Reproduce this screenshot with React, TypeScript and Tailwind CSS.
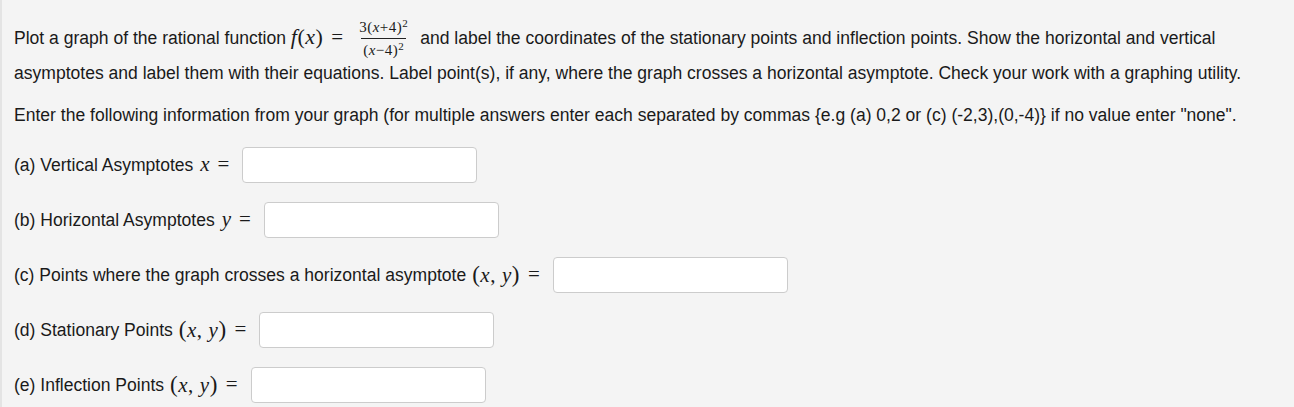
import React from 'react';

const serif = "font-['Liberation_Serif','Times_New_Roman',serif]";

function M({ children }: { children: React.ReactNode }) {
  return <span className={`${serif} italic text-[21px] ml-[7px]`}>{children}</span>;
}

function Eq() {
  return <span className={`${serif} text-[21px] ml-[8px] mr-[9px]`}>=</span>;
}

function XY() {
  return (
    <span className={`${serif} text-[21px] ml-[6px] tracking-[0.5px]`}>
      <span className="text-[23px]">(</span>
      <span className="italic">x</span>,<span className="italic ml-[6px]">y</span>
      <span className="text-[23px]">)</span>
    </span>
  );
}

function Frac() {
  return (
    <span className={`${serif} inline-flex flex-col items-center align-middle leading-none text-[15px] my-[-7px] mx-[5px] tracking-[0.5px]`}>
      <span className="px-[2px] pb-[3px]">
        3(<span className="italic">x</span>+4)<sup className="text-[11px]">2</sup>
      </span>
      <span className="border-t border-[#222] px-[2px] pt-[4px]">
        (<span className="italic">x</span>−4)<sup className="text-[11px]">2</sup>
      </span>
    </span>
  );
}

function Row({ label, math }: { label: string; math: React.ReactNode }) {
  return (
    <div className="flex items-center h-[36px]">
      <span>{label}</span>
      {math}
      <Eq />
      <input className="ml-[4px] h-[36px] w-[235px] bg-white border border-[#cccccc] rounded-[4px] outline-none" />
    </div>
  );
}

export default function App() {
  return (
    <div className="w-[1294px] h-[407px] bg-[#f4f4f4] border-l-2 border-[#e4e4e4] pl-[12px] pr-[20px] pt-[19px] text-[17.55px] text-[#1a1a1a] font-['Liberation_Sans',Arial,sans-serif] overflow-hidden">
      <p className="leading-[35px]">
        Plot a graph of the rational function{' '}
        <span className={`${serif} text-[22px] tracking-[0.5px]`}>
          <span className="italic">f</span>(<span className="italic">x</span>)
        </span>
        <Eq />
        <Frac /> and label the coordinates of the stationary points and inflection points. Show the horizontal and vertical
        asymptotes and label them with their equations. Label point(s), if any, where the graph crosses a horizontal asymptote. Check your work with a graphing utility.
      </p>
      <p className="mt-[12px] leading-[24px]">
        Enter the following information from your graph (for multiple answers enter each separated by commas {'{'}e.g (a) 0,2 or (c) (-2,3),(0,-4){'}'} if no value enter "none".
      </p>
      <div className="mt-[20px] flex flex-col gap-[19px]">
        <Row label="(a) Vertical Asymptotes" math={<M>x</M>} />
        <Row label="(b) Horizontal Asymptotes" math={<M>y</M>} />
        <Row label="(c) Points where the graph crosses a horizontal asymptote" math={<XY />} />
        <Row label="(d) Stationary Points" math={<XY />} />
        <Row label="(e) Inflection Points" math={<XY />} />
      </div>
    </div>
  );
}
